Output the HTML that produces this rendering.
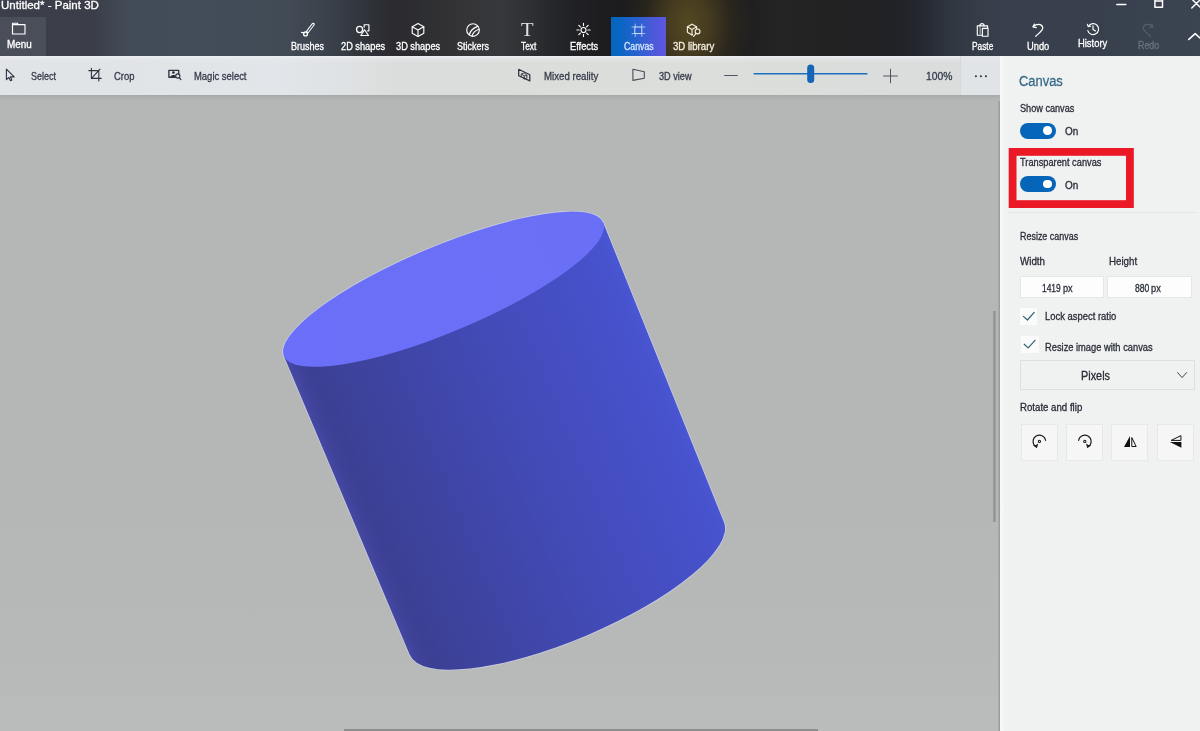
<!DOCTYPE html>
<html>
<head>
<meta charset="utf-8">
<title>Untitled - Paint 3D</title>
<style>
*{box-sizing:border-box;margin:0;padding:0}
html,body{width:1200px;height:731px;overflow:hidden;background:#b5b7b6;font-family:"Liberation Sans",sans-serif;}
body{position:relative}
.abs{position:absolute}
.L{position:absolute;white-space:nowrap;transform-origin:0 0;display:block}
#labels{position:absolute;left:0;top:0;width:1200px;height:731px;pointer-events:none;will-change:transform;-webkit-font-smoothing:antialiased}
.L{-webkit-text-stroke:.3px currentColor}
/* header */
#hdr{position:absolute;left:0;top:0;width:1200px;height:56px;overflow:hidden;
 background:
  radial-gradient(ellipse 66px 92px at 688px 24px,rgba(92,78,34,.88) 0,rgba(86,72,32,.72) 30%,rgba(64,54,26,.36) 65%,rgba(40,34,20,0) 100%),
  linear-gradient(90deg,#3b3f49 0px,#3b3e49 95px,#424b57 125px,#434d59 200px,#414a55 290px,#3a414a 330px,#30343b 365px,#2a2a2f 395px,#2e2f32 425px,#343437 460px,#37383c 500px,#2f3033 530px,#232428 560px,#1d1d20 600px,#1b1b1d 650px,#1e1e20 740px,#242425 780px,#222223 820px,#222224 870px,#202227 900px,#252a31 925px,#303741 952px,#353d48 978px,#37404c 1005px,#37404c 1100px,#3b4451 1200px);
}
#menu{position:absolute;left:0;top:17px;width:46px;height:39px;background:#4a4e58}
#t-canvas{position:absolute;left:611px;top:17px;width:55px;height:39px;background:linear-gradient(90deg,#0566bd 0%,#0866c2 15%,#2562cf 45%,#495ad8 75%,#5956e0 92%,#5d58dc 100%)}
#hico{position:absolute;left:0;top:0;overflow:visible}
#hico *{fill:none;stroke:#fff;stroke-width:1.15;stroke-linecap:round;stroke-linejoin:round}
#hico .dim *{stroke:#565d67}
#hico .cv *{stroke:#d6e7ff}
#hico .lib *{stroke:#f3eedf}
/* sub toolbar */
#sub{position:absolute;left:0;top:56px;width:1000px;height:39px;
 background:
  linear-gradient(180deg,rgba(238,240,244,.85) 0,rgba(232,234,238,.45) 3px,rgba(228,230,232,0) 7px),
  linear-gradient(90deg,#e1e4e6 0,#e2e5e9 280px,#dfe2e4 340px,#dbdddc 400px,#dcdedb 700px,#dadddc 960px)}
#subshadow{position:absolute;left:0;top:95px;width:1000px;height:6px;background:linear-gradient(180deg,#a7a9a9 0,#adafaf 35%,#b3b5b4 75%,#b5b7b6 100%)}
#sico{position:absolute;left:0;top:0;overflow:visible}
#sico *{fill:none;stroke:#2f3340;stroke-width:1.1;stroke-linecap:round;stroke-linejoin:round}
/* stage */
#stage{position:absolute;left:0;top:95px;width:1000px;height:636px;overflow:hidden;
 background:linear-gradient(180deg,#b5b7b6 0,#b5b7b6 62%,#b7b9b8 85%,#babcbb 100%)}
/* side panel */
#side{position:absolute;left:1000px;top:56px;width:200px;height:675px;background:linear-gradient(90deg,#f6f7f7 0,#f5f6f6 3px,#f0f1f1 4.5px)}
#side .box{position:absolute;background:#fdfdfd;border:1px solid #e6e7e7}
#side .btn{position:absolute;background:#f6f6f6;border:1px solid #e7e8e8;width:37px;height:37px;top:368px}
.tog{position:absolute;width:36px;height:16px;border-radius:8px;background:#0465b9}
.tog i{position:absolute;left:23.4px;top:3.7px;width:8.6px;height:8.6px;border-radius:50%;background:#fff}
#pico{position:absolute;left:-1000px;top:-56px;overflow:visible}
</style>
</head>

<body>
<div id="stage">
<svg class="abs" style="left:0;top:0" width="1001" height="636" viewBox="0 95 1001 636">
  <defs>
    <linearGradient id="bodyg" gradientUnits="userSpaceOnUse" x1="347" y1="507" x2="664" y2="376">
      <stop offset="0" stop-color="#4649a4"/>
      <stop offset="0.025" stop-color="#3f4298"/>
      <stop offset="0.06" stop-color="#3c4094"/>
      <stop offset="0.16" stop-color="#3d429b"/>
      <stop offset="0.3" stop-color="#3f45a5"/>
      <stop offset="0.567" stop-color="#424bb7"/>
      <stop offset="0.8" stop-color="#454fc4"/>
      <stop offset="0.97" stop-color="#4752cd"/>
      <stop offset="1" stop-color="#4a55d3"/>
    </linearGradient>
    <linearGradient id="topg" gradientUnits="userSpaceOnUse" x1="284" y1="357" x2="603" y2="222">
      <stop offset="0" stop-color="#6b6ff9"/>
      <stop offset="1" stop-color="#6a70f5"/>
    </linearGradient>
  </defs>
  <path d="M283.90 355.96 L409.74 654.75 A170.5 51.1 -22.9 0 0 723.86 522.05 L603.10 222.44 Z" fill="none" stroke="#cfd2ee" stroke-width="1.7" stroke-linejoin="round" opacity=".7"/>
  <path d="M283.90 355.96 A173 43.0 -22.7 1 1 603.10 222.44 A173 43.0 -22.7 1 1 283.90 355.96 Z" fill="none" stroke="#cfd2ee" stroke-width="1.7" opacity=".7"/>
  <path fill="url(#bodyg)" d="M283.90 355.96 L409.74 654.75 A170.5 51.1 -22.9 0 0 723.86 522.05 L603.10 222.44 Z"/>
  <path fill="url(#topg)" d="M283.90 355.96 A173 43.0 -22.7 1 1 603.10 222.44 A173 43.0 -22.7 1 1 283.90 355.96 Z"/>
</svg>
<div class="abs" style="left:992.6px;top:215.8px;width:3.8px;height:211.2px;background:linear-gradient(90deg,#a4a6a6 0,#8f9191 35%,#929494 60%,#a9abab 100%)"></div>
<div class="abs" style="left:998px;top:0;width:2px;height:636px;background:linear-gradient(90deg,rgba(150,152,152,0) 0,#999b9b 55%,#9c9e9e 100%)"></div>
<div class="abs" style="left:344px;top:633.8px;width:474px;height:2.2px;background:#8d8f8f"></div>
</div>

<div id="hdr">
  <div id="menu"></div>
  <div id="t-canvas"></div>
  <svg id="hico" width="1200" height="56" viewBox="0 0 1200 56">
    <!-- menu folder -->
    <path d="M12.5 24.6 V34 H25 V24.6 Z M12.5 24.6 V23.2 H17.2 L18.3 24.6"/>
    <!-- brush -->
    <path d="M313.2 24.3 L307.5 31.7" style="stroke-width:3.1"/>
    <path d="M313 24.7 L307.9 31.3" style="stroke:#3e4650;stroke-width:1.15"/>
    <circle cx="305.5" cy="33.9" r="1.9" style="stroke-width:1.35"/>
    <path d="M304.2 32.9 L301.5 32.3" style="stroke-width:1.2"/>
    <!-- 2D shapes -->
    <circle cx="359.6" cy="29.5" r="3.05" style="stroke-width:1.3"/>
    <path d="M364.2 27.2 V24.7 H368.9 V30.8 H367.6"/>
    <path d="M364.6 29.8 L368.5 35.5 H360.8 Z"/>
    <!-- 3D shapes cube -->
    <path d="M418 23.6 L423.8 26.8 V33.3 L418 36.5 L412.2 33.3 V26.8 Z"/>
    <path d="M412.2 26.8 L418 30 L423.8 26.8 M418 30 V36.5"/>
    <!-- stickers -->
    <circle cx="473" cy="30" r="6.3"/>
    <path d="M469.4 34.6 C470.2 31.2 473.4 28 477.6 26.4"/>
    <path d="M472 35.8 C472.8 33 475.6 30.4 479 29.2"/>
    <!-- effects sun -->
    <circle cx="583.5" cy="30" r="2.5"/>
    <path d="M583.5 23.4 V25.6 M583.5 34.4 V36.6 M576.9 30 H579.1 M587.9 30 H590.1 M578.8 25.3 L580.4 26.9 M586.6 33.1 L588.2 34.7 M588.2 25.3 L586.6 26.9 M580.4 33.1 L578.8 34.7"/>
    <!-- canvas -->
    <g class="cv">
    <path d="M635.2 27 H641.8 V33.6 H635.2 Z" style="stroke-width:1"/>
    <path d="M632 27 H635 M642 27 H645 M632 33.6 H635 M642 33.6 H645 M635.2 24 V26.8 M635.2 33.8 V36.6 M641.8 24 V26.8 M641.8 33.8 V36.6" style="stroke-width:.8;opacity:.85"/>
    </g>
    <!-- 3D library -->
    <g class="lib">
    <path d="M692 24.2 L696.6 26.8 V28.6 M692.6 34.6 L692 35 L687.4 32.3 V26.8 L692 24.2"/>
    <path d="M687.4 26.8 L692 29.5 L696.6 26.8 M692 29.5 V35"/>
    <circle cx="697.6" cy="31.4" r="2.4"/>
    <path d="M696 33.3 L693.6 36.4"/>
    </g>
    <!-- paste -->
    <path d="M982 35.2 H977.3 V25.9 H987.6 V28"/>
    <path d="M980 25.9 V24.6 Q982 22.6 984 24.6 V25.9"/>
    <path d="M982.4 28.3 H988 V36.2 H982.4 Z"/>
    <path d="M980.1 27.6 V34" style="stroke-width:.9;opacity:.8"/>
    <!-- undo -->
    <path d="M1034.4 24.2 L1033 26.9 L1036.2 27.6" style="stroke-width:1.3"/>
    <path d="M1033.4 26.6 C1036.4 23.6 1041.8 23.4 1042.7 27.4 C1043.2 30.6 1039 33 1035.8 36.2" style="stroke-width:1.3"/>
    <!-- history -->
    <path d="M1088.4 26.2 A5.5 5.5 0 1 1 1087.8 30.6"/>
    <path d="M1087.4 24.4 L1088.2 26.6 L1090.6 26.2"/>
    <path d="M1093 25.8 V29.4 L1095.6 31"/>
    <!-- redo (disabled) -->
    <g class="dim">
    <path d="M1151.6 24.2 L1153 26.9 L1149.8 27.6" style="stroke-width:1.3"/>
    <path d="M1152.6 26.6 C1149.6 23.6 1144.2 23.4 1143.3 27.4 C1142.8 30.6 1147 33 1150.2 36.2" style="stroke-width:1.3"/>
    </g>
    <!-- chevron up -->
    <path d="M1188.8 39.4 L1195.2 33.6 L1201.6 39.4" style="stroke-width:1.55"/>
    <!-- window controls -->
    <path d="M1116.8 4.5 H1125.8" style="stroke-width:1.5"/>
    <path d="M1154.9 1 H1162.5 V7.2 H1154.9 Z M1154.9 1 V-2 M1162.5 1 V-2" style="stroke-width:1.5;stroke-linecap:butt"/>
    <path d="M1191.8 -1 L1201 8 M1201 -1 L1191.8 8" style="stroke-width:1.5"/>
  </svg>
  <span class="L" style="will-change:transform;-webkit-text-stroke:0;left:521.3px;top:20.7px;font-family:'Liberation Serif',serif;font-size:18px;line-height:18px;color:#e2e2e2;transform:scaleX(1.14)">T</span>
</div>

<div id="sub"></div>
<div id="subshadow"></div>
<div class="abs" style="left:960px;top:56px;width:40px;height:39px;background:linear-gradient(180deg,#e6e8eb 0,#e1e4e6 6px);border-left:1px solid #d6d9da"></div>
<svg id="sico" width="1001" height="100" viewBox="0 0 1001 100">
  <!-- cursor -->
  <path d="M6.4 69.2 V79.7 L8.8 77.5 L10.5 80.7 L11.9 80.1 L10.3 76.9 H14.2 Z"/>
  <!-- crop -->
  <path d="M91.4 68.2 V78.4 H101.2 M88.8 70.6 H98.8 V81 M100 69.2 L92 77.8"/>
  <!-- magic select -->
  <path d="M168.9 70.3 H178.7 V77.2 H168.9 Z" style="stroke-width:1.35"/>
  <circle cx="173.4" cy="72.5" r="1.35" style="fill:#2a2d3c;stroke:none"/>
  <path d="M170.6 76.9 C170.8 74.3 176 74.3 176.2 76.9 Z" style="fill:#2a2d3c;stroke:none"/>
  <circle cx="177.8" cy="76" r="2.1" style="fill:#e1e4e6;stroke-width:1.1"/>
  <path d="M179.3 77.6 L180.9 79.6" style="stroke-width:1.2"/>
  <!-- mixed reality -->
  <path d="M518.7 69.3 L529.8 74.7 V80.9 L518.7 75.7 Z" style="stroke-width:1.25"/>
  <path d="M521.6 74 L524.2 72.9 L526.9 75.3 V78.2 L524.4 78.9 L521.6 76.8 Z M521.6 74 L524.3 76 L526.9 75.3 M524.3 76 V78.9" style="stroke-width:.9"/>
  <!-- 3D view -->
  <path d="M632.9 69.3 L644.3 71.7 V78.2 L632.9 80.4 Z" style="stroke:#484c58"/>
  <!-- minus / plus / dots -->
  <path d="M724.6 75.5 H737.4 M883.6 76 H897.4 M890.5 69.2 V82.8" style="stroke-width:1;stroke:#50545e"/>
  <circle cx="975.9" cy="76.2" r="1.05" style="fill:#2f3340;stroke:none"/>
  <circle cx="980.9" cy="76.2" r="1.05" style="fill:#2f3340;stroke:none"/>
  <circle cx="985.9" cy="76.2" r="1.05" style="fill:#2f3340;stroke:none"/>
  <!-- slider -->
  <path d="M753.6 73.7 H867.4" style="stroke:#1e6fc0;stroke-width:1.6;stroke-linecap:butt"/>
  <rect x="807.2" y="64.4" width="7" height="18.6" rx="3.5" style="fill:#1566b6;stroke:none"/>
</svg>

<div id="side">
  <!-- toggles -->
  <div class="tog" style="left:19.7px;top:66.6px"><i></i></div>
  <div class="tog" style="left:19.7px;top:120.2px"><i></i></div>
  <!-- red highlight -->
  <!-- divider -->
  <div class="abs" style="left:9.0px;top:155.5px;width:188px;height:1px;background:#e3e4e4"></div>
  <!-- inputs -->
  <div class="box" style="left:19.6px;top:220.2px;width:84px;height:21.4px"></div>
  <div class="box" style="left:107.4px;top:220.2px;width:84.6px;height:21.4px"></div>
  <!-- checkboxes -->
  <div class="abs" style="left:20.4px;top:252.4px;width:16.6px;height:16.6px;background:#fbfbfb"></div>
  <div class="abs" style="left:20.8px;top:279.8px;width:18px;height:16.8px;background:#fbfbfb"></div>
  <!-- dropdown -->
  <div class="abs" style="left:20.2px;top:303.6px;width:174.4px;height:30.4px;background:#f0f1f1;border:1px solid #dedfdf"></div>
  <!-- buttons -->
  <div class="btn" style="left:20.8px"></div>
  <div class="btn" style="left:65.8px"></div>
  <div class="btn" style="left:111.2px"></div>
  <div class="btn" style="left:156.6px"></div>
  <svg id="pico" width="1200" height="731" viewBox="0 0 1200 731">
    <rect x="1012.6" y="151.9" width="117.3" height="52.2" fill="none" stroke="#ea1925" stroke-width="7.8"/>
    <g fill="none" stroke="#2d6273" stroke-width="1.2" stroke-linecap="round" stroke-linejoin="round">
      <path d="M1023.4 316.4 L1027.4 320 L1034.2 312.4"/>
      <path d="M1024.2 344.2 L1028.2 347.9 L1035 340.3"/>
    </g>
    <path d="M1177.6 372.6 L1182.1 377.6 L1186.6 372.6" fill="none" stroke="#444" stroke-width="1" stroke-linecap="round" stroke-linejoin="round"/>
    <g fill="none" stroke="#1c1c1c" stroke-width="1.1" stroke-linecap="round" stroke-linejoin="round">
      <!-- rotate left -->
      <path d="M1035.5 446.4 A6.3 6.3 0 1 1 1045.6 440.5"/>
      <path d="M1034 445.4 L1036.6 447.4 L1037.4 444.4" fill="#1c1c1c"/>
      <circle cx="1039.4" cy="441.4" r="1.1"/>
      <!-- rotate right -->
      <path d="M1088.7 446.4 A6.3 6.3 0 1 0 1078.6 440.5"/>
      <path d="M1090.2 445.4 L1087.6 447.4 L1086.8 444.4" fill="#1c1c1c"/>
      <circle cx="1084.8" cy="441.4" r="1.1"/>
    </g>
    <!-- flip horizontal -->
    <path d="M1124 447 H1130 V435.9 Z" fill="#111"/>
    <path d="M1131.8 437.6 V446.5 H1136.2 Z" fill="none" stroke="#111" stroke-width="1"/>
    <!-- flip vertical -->
    <path d="M1171.2 440.4 H1180.9 V435.6 Z" fill="none" stroke="#111" stroke-width="1"/>
    <path d="M1169.8 442 H1181.4 V447.8 Z" fill="#111"/>
  </svg>
</div>

<div id="labels">
<span class="L" style="left:1.20px;top:0.22px;font-size:11.2px;line-height:11.2px;color:#fff;transform:scaleX(1.0288);">Untitled* - Paint 3D</span>
<span class="L" style="left:7.00px;top:40.23px;font-size:10px;line-height:10px;color:#fff;transform:scaleX(0.9896);">Menu</span>
<span class="L" style="left:291.30px;top:41.78px;font-size:10.3px;line-height:10.3px;color:#fff;transform:scaleX(0.8744);">Brushes</span>
<span class="L" style="left:341.00px;top:41.78px;font-size:10.3px;line-height:10.3px;color:#fff;transform:scaleX(0.8965);">2D shapes</span>
<span class="L" style="left:396.00px;top:41.78px;font-size:10.3px;line-height:10.3px;color:#fff;transform:scaleX(0.8965);">3D shapes</span>
<span class="L" style="left:457.00px;top:41.78px;font-size:10.3px;line-height:10.3px;color:#fff;transform:scaleX(0.8775);">Stickers</span>
<span class="L" style="left:521.00px;top:41.78px;font-size:10.3px;line-height:10.3px;color:#fff;transform:scaleX(0.8148);">Text</span>
<span class="L" style="left:570.00px;top:41.78px;font-size:10.3px;line-height:10.3px;color:#fff;transform:scaleX(0.8992);">Effects</span>
<span class="L" style="left:624.00px;top:41.78px;font-size:10.3px;line-height:10.3px;color:#d4e6ff;transform:scaleX(0.8486);">Canvas</span>
<span class="L" style="left:672.50px;top:41.78px;font-size:10.3px;line-height:10.3px;color:#f3eedf;transform:scaleX(0.9352);">3D library</span>
<span class="L" style="left:972.00px;top:41.78px;font-size:10.3px;line-height:10.3px;color:#fff;transform:scaleX(0.8082);">Paste</span>
<span class="L" style="left:1026.50px;top:41.78px;font-size:10.3px;line-height:10.3px;color:#fff;transform:scaleX(0.9040);">Undo</span>
<span class="L" style="left:1077.50px;top:39.28px;font-size:10.3px;line-height:10.3px;color:#fff;transform:scaleX(0.9122);">History</span>
<span class="L" style="left:1137.50px;top:41.28px;font-size:10.3px;line-height:10.3px;color:#6d747e;transform:scaleX(0.8638);">Redo</span>
<span class="L" style="left:30.60px;top:71.90px;font-size:10.4px;line-height:10.4px;color:#353a4a;transform:scaleX(0.8623);">Select</span>
<span class="L" style="left:114.40px;top:71.80px;font-size:10.4px;line-height:10.4px;color:#353a4a;transform:scaleX(0.9058);">Crop</span>
<span class="L" style="left:194.40px;top:71.90px;font-size:10.4px;line-height:10.4px;color:#353a4a;transform:scaleX(0.9091);">Magic select</span>
<span class="L" style="left:544.00px;top:71.90px;font-size:10.4px;line-height:10.4px;color:#353a4a;transform:scaleX(0.9302);">Mixed reality</span>
<span class="L" style="left:658.60px;top:71.90px;font-size:10.4px;line-height:10.4px;color:#353a4a;transform:scaleX(0.8811);">3D view</span>
<span class="L" style="left:925.60px;top:70.93px;font-size:10.6px;line-height:10.6px;color:#353a4a;transform:scaleX(0.9756);">100%</span>
<span class="L" style="left:1018.70px;top:72.75px;font-size:15.3px;line-height:15.3px;color:#366a88;transform:scaleX(0.8445);">Canvas</span>
<span class="L" style="left:1020.00px;top:104.38px;font-size:10.3px;line-height:10.3px;color:#2a2e38;transform:scaleX(0.8871);">Show canvas</span>
<span class="L" style="left:1065.30px;top:126.74px;font-size:10px;line-height:10px;color:#2a2e38;transform:scaleX(0.9939);">On</span>
<span class="L" style="left:1020.00px;top:157.98px;font-size:10.3px;line-height:10.3px;color:#2a2e38;transform:scaleX(0.8986);">Transparent canvas</span>
<span class="L" style="left:1065.30px;top:180.74px;font-size:10px;line-height:10px;color:#2a2e38;transform:scaleX(0.9939);">On</span>
<span class="L" style="left:1020.00px;top:232.18px;font-size:10.3px;line-height:10.3px;color:#2a2e38;transform:scaleX(0.8681);">Resize canvas</span>
<span class="L" style="left:1020.00px;top:257.48px;font-size:10.3px;line-height:10.3px;color:#2a2e38;transform:scaleX(0.9514);">Width</span>
<span class="L" style="left:1108.70px;top:257.48px;font-size:10.3px;line-height:10.3px;color:#2a2e38;transform:scaleX(0.9464);">Height</span>
<span class="L" style="left:1042.00px;top:282.81px;font-size:10.5px;line-height:10.5px;color:#2a2e38;transform:scaleX(0.7994);">1419</span>
<span class="L" style="left:1063.00px;top:282.81px;font-size:10.5px;line-height:10.5px;color:#2a2e38;transform:scaleX(0.8700);">px</span>
<span class="L" style="left:1134.70px;top:282.81px;font-size:10.5px;line-height:10.5px;color:#2a2e38;transform:scaleX(0.8202);">880</span>
<span class="L" style="left:1151.30px;top:282.81px;font-size:10.5px;line-height:10.5px;color:#2a2e38;transform:scaleX(0.8784);">px</span>
<span class="L" style="left:1044.70px;top:312.18px;font-size:10.3px;line-height:10.3px;color:#2a2e38;transform:scaleX(0.9153);">Lock aspect ratio</span>
<span class="L" style="left:1045.30px;top:342.98px;font-size:10.3px;line-height:10.3px;color:#2a2e38;transform:scaleX(0.9042);">Resize image with canvas</span>
<span class="L" style="left:1080.50px;top:370.24px;font-size:12px;line-height:12px;color:#2a2e38;transform:scaleX(0.9060);">Pixels</span>
<span class="L" style="left:1020.00px;top:402.98px;font-size:10.3px;line-height:10.3px;color:#2a2e38;transform:scaleX(0.9374);">Rotate and flip</span>
</div>
</body>
</html>
